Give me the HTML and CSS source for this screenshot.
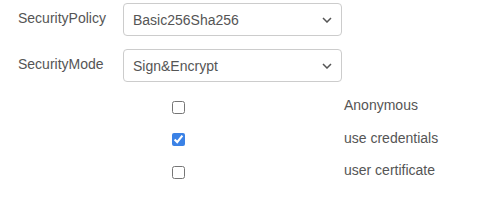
FILE: index.html
```html
<!DOCTYPE html>
<html lang="en">
<head>
  <meta charset="UTF-8" />
  <title>Connection security</title>
  <link rel="stylesheet" href="styles.css">
</head>
<body>
  <form class="security-form">
    <div class="field">
      <label class="field-label" for="policy">SecurityPolicy</label>
      <select id="policy" class="field-select">
        <option>Basic256Sha256</option>
      </select>
    </div>
    <div class="field field-last">
      <label class="field-label" for="mode">SecurityMode</label>
      <select id="mode" class="field-select">
        <option>Sign&amp;Encrypt</option>
      </select>
    </div>

    <div class="auth-list">
      <div class="auth-row">
        <input type="checkbox" id="anon" class="auth-check">
        <label for="anon" class="auth-label">Anonymous</label>
      </div>
      <div class="auth-row">
        <input type="checkbox" id="creds" class="auth-check" checked>
        <label for="creds" class="auth-label">use credentials</label>
      </div>
      <div class="auth-row">
        <input type="checkbox" id="cert" class="auth-check">
        <label for="cert" class="auth-label">user certificate</label>
      </div>
    </div>
  </form>
</body>
</html>
```

FILE: styles.css
```css
* {
  box-sizing: border-box;
  margin: 0;
  padding: 0;
}

body {
  background-color: #fff;
  font-family: "Liberation Sans", Arial, sans-serif;
  font-size: 14px;
  color: #555;
}

.security-form {
  padding: 3px 0 0 18px;
}

.field {
  display: flex;
  align-items: center;
  margin-bottom: 13px;
}

.field-last {
  margin-bottom: 9px;
}

.field-label {
  width: 105px;
  color: #555;
  padding-bottom: 3px;
}

.field-select {
  width: 219px;
  height: 33px;
  padding: 0 30px 0 9px;
  font-family: "Liberation Sans", Arial, sans-serif;
  font-size: 14px;
  color: #555;
  background-color: #fff;
  border: 1px solid #ccc;
  border-radius: 4px;
  appearance: none;
  background-image: url("data:image/svg+xml,%3Csvg xmlns='http://www.w3.org/2000/svg' width='10' height='6' viewBox='0 0 10 6'%3E%3Cpath d='M1 1l4 4 4-4' fill='none' stroke='%23555' stroke-width='1.5'/%3E%3C/svg%3E");
  background-repeat: no-repeat;
  background-position: right 9px center;
}

.auth-row {
  display: flex;
  align-items: center;
  height: 32.5px;
}

.auth-check {
  width: 13px;
  height: 13px;
  margin-left: 154px;
  accent-color: #3b82e6;
}

.auth-label {
  margin-left: 159px;
  padding-bottom: 4px;
}
```
